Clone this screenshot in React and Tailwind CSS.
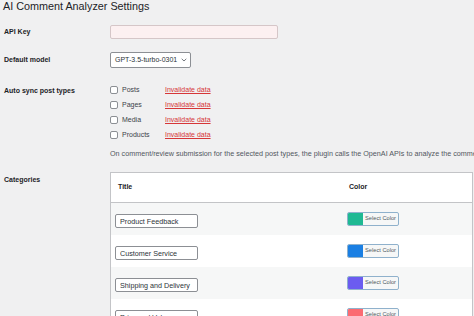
import React from 'react';

const postTypes = ['Posts', 'Pages', 'Media', 'Products'];

const categories = [
    { title: 'Product Feedback', color: '#1fb993' },
    { title: 'Customer Service', color: '#1a7fe3' },
    { title: 'Shipping and Delivery', color: '#6b5cf0' },
    { title: 'Price and Value', color: '#fb6b72' },
];

const ColorButton = ({ color }) => (
    <button className="flex h-[14px] w-[52px] items-stretch overflow-hidden rounded-[2px] border border-[#8fb1cc] bg-[#f6f7f7]">
        <span className="w-[15px] shrink-0" style={{ backgroundColor: color }}></span>
        <span className="flex flex-1 items-center justify-center text-[5.7px] leading-none text-[#50575e]">Select Color</span>
    </button>
);

export default function App() {
    return (
        <div className="h-[316px] w-[474px] overflow-hidden bg-[#f0f0f1] font-['Liberation_Sans',Arial,sans-serif] text-[#1d2327]">
            {/* Page title */}
            <div className="h-[20px] whitespace-nowrap pl-[3px] text-[10.8px] leading-[12px] text-[#1d2327]">
                AI Comment Analyzer Settings
            </div>

            {/* API Key */}
            <div className="mt-[5px] grid grid-cols-[110px_1fr] items-center">
                <div className="pl-[4px] text-[7px] font-bold">API Key</div>
                <input
                    type="text"
                    className="h-[14px] w-[168px] rounded-[2px] border border-[#d5c6c8] bg-[#fcf0f1] outline-none"
                />
            </div>

            {/* Default model */}
            <div className="mt-[13px] grid grid-cols-[110px_1fr] items-center">
                <div className="pl-[4px] text-[7px] font-bold">Default model</div>
                <div className="flex h-[16px] w-[81px] items-center justify-between rounded-[2px] border border-[#8c8f94] bg-white pl-[4px] pr-[3px] text-[7px] text-[#2c3338]">
                    <span>GPT-3.5-turbo-0301</span>
                    <svg width="6" height="4" viewBox="0 0 6 4" fill="none">
                        <path d="M0.7 0.8 L3 3 L5.3 0.8" stroke="#50575e" strokeWidth="0.8" />
                    </svg>
                </div>
            </div>

            {/* Auto sync post types */}
            <div className="mt-[14.5px] grid grid-cols-[110px_1fr] items-start">
                <div className="pl-[4px] text-[7px] font-bold leading-[15px]">Auto sync post types</div>
                <div>
                    {postTypes.map(type => (
                        <div key={type} className="flex h-[15px] items-center text-[7px]">
                            <span className="h-[8px] w-[8px] shrink-0 rounded-[2px] border border-[#8c8f94] bg-white"></span>
                            <span className="ml-[4px] w-[43px] text-[#3c434a]">{type}</span>
                            <a className="text-[#d63638] underline decoration-[0.5px] underline-offset-1">Invalidate data</a>
                        </div>
                    ))}
                    <p className="mt-[3px] whitespace-nowrap text-[7.2px] leading-[15px] text-[#50575e]">
                        On comment/review submission for the selected post types, the plugin calls the OpenAI APIs to analyze the comments.
                    </p>
                </div>
            </div>

            {/* Categories */}
            <div className="mt-[11.5px] grid grid-cols-[110px_363px] items-start">
                <div className="pl-[4px] pt-[4px] text-[7px] font-bold leading-[8px]">Categories</div>
                <div className="border-x border-t border-[#c3c4c7] bg-white">
                    <div className="flex h-[29.5px] items-center border-b border-[#c3c4c7] text-[7px] font-bold">
                        <div className="w-[231px] pl-[7px]">Title</div>
                        <div className="pl-[7px]">Color</div>
                    </div>
                    {categories.map((cat, i) => (
                        <div
                            key={cat.title}
                            className={`flex h-[32px] items-center ${i % 2 === 0 ? 'bg-[#f6f7f7]' : 'bg-white'}`}
                        >
                            <div className="w-[231px] pl-[4px]">
                                <input
                                    type="text"
                                    defaultValue={cat.title}
                                    className="h-[14px] w-[83px] rounded-[2px] border border-[#8c8f94] bg-white px-[4px] text-[7.2px] text-[#2c3338] outline-none"
                                />
                            </div>
                            <div className="pl-[5px]">
                                <ColorButton color={cat.color} />
                            </div>
                        </div>
                    ))}
                </div>
            </div>
        </div>
    );
}
